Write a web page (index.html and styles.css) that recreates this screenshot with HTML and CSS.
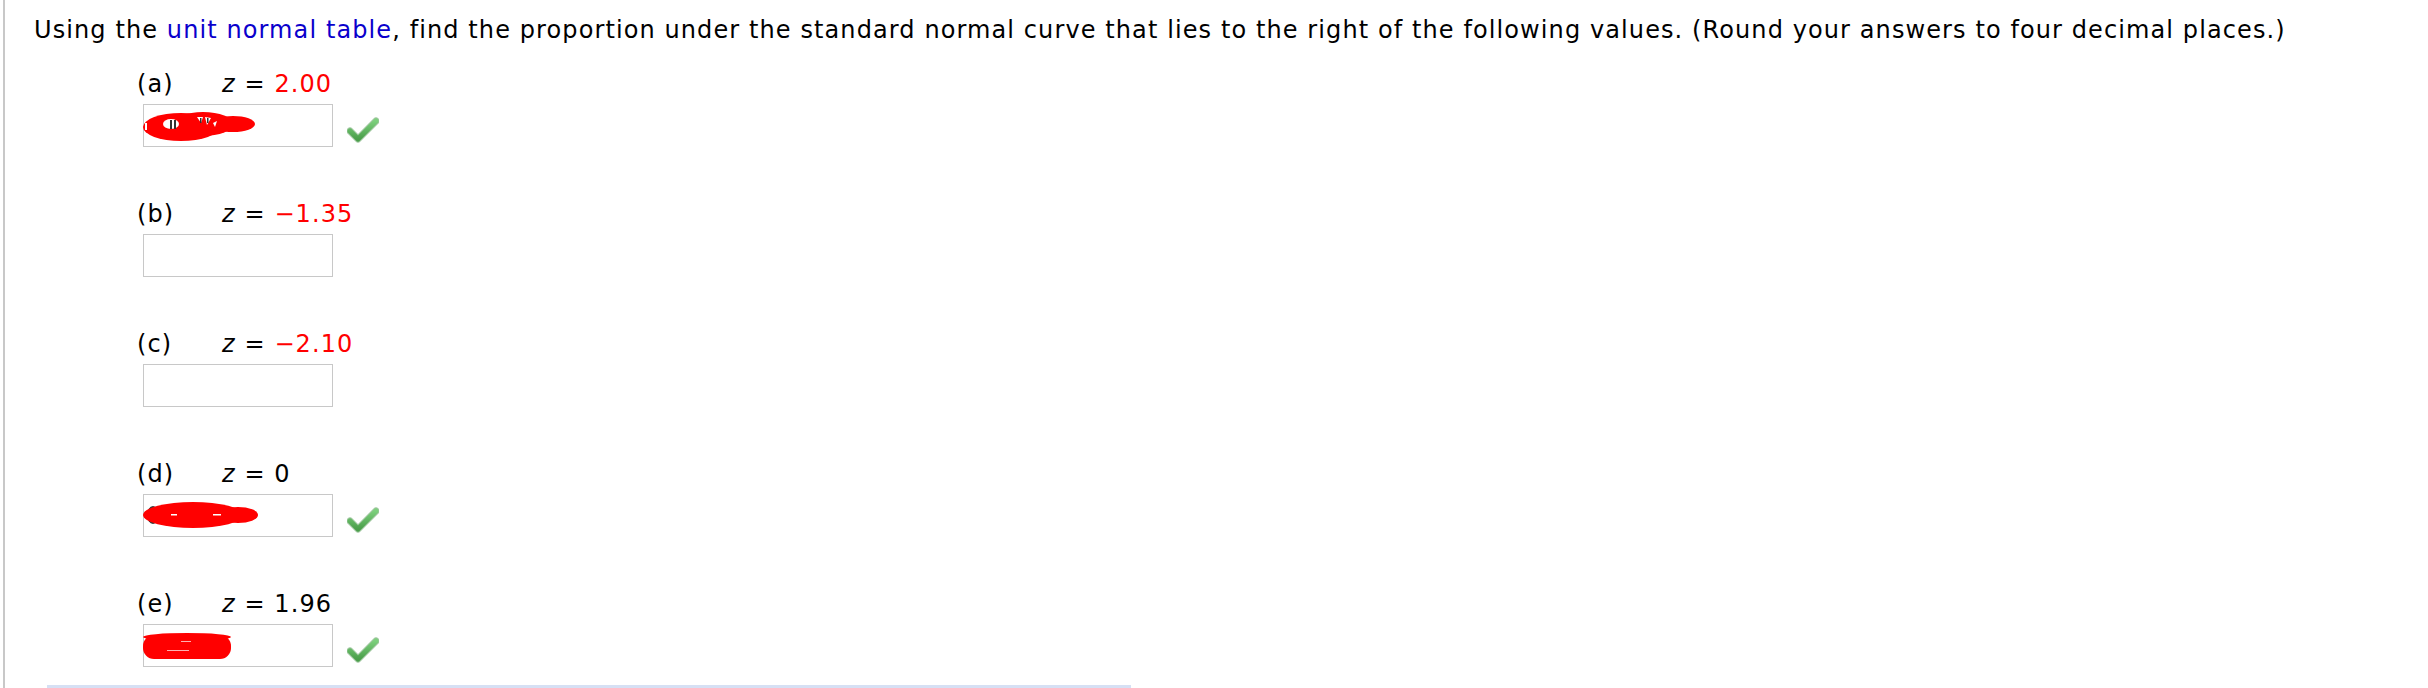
FILE: index.html
```html
<!DOCTYPE html>
<html>
<head>
<meta charset="utf-8">
<link rel="stylesheet" href="styles.css">
</head>
<body>
<div class="page">
  <p class="intro">Using the <a class="link" href="#">unit normal table</a>, find the proportion under the standard normal curve that lies to the right of the following values. (Round your answers to four decimal places.)</p>

  <div class="parts">
  <div class="part">
    <div class="qline"><span class="lbl">(a)</span><span class="expr"><i>z</i> = <span class="val">2.00</span></span></div>
    <div class="aline">
      <div class="box">
        <svg class="blob" width="120" height="34" viewBox="0 0 120 34">
          <ellipse cx="38" cy="18" rx="38" ry="14" fill="#ff0000"/>
          <ellipse cx="60" cy="15" rx="30" ry="12" fill="#ff0000"/>
          <ellipse cx="90" cy="15" rx="22" ry="8" fill="#ff0000"/>
          <ellipse cx="28" cy="15" rx="8" ry="5" fill="#fff"/>
          <rect x="27" y="11" width="2" height="9" fill="#333"/>
          <rect x="31" y="11" width="2" height="9" fill="#333"/>
          <path d="M54 8 L60 8 L58 14 Z M62 8 L68 9 L64 16 Z M70 14 L74 12 L72 18 Z" fill="#fff"/>
          <rect x="57" y="9" width="1.5" height="5" fill="#333"/>
          <rect x="64" y="9" width="1.5" height="5" fill="#333"/>
          <rect x="2" y="14" width="2" height="7" fill="#fff"/>
        </svg>
      </div>
      <svg class="check" width="32" height="26" viewBox="0 0 32 26"><defs><linearGradient id="g1" x1="0" y1="0" x2="0" y2="1"><stop offset="0" stop-color="#7ccf7c"/><stop offset="1" stop-color="#4a9e4a"/></linearGradient></defs><path d="M3 14 L11 22 L29 4" fill="none" stroke="#3f8f3f" stroke-opacity="0.5" stroke-width="7" stroke-linecap="round" stroke-linejoin="round"/><path d="M3 14 L11 22 L29 4" fill="none" stroke="url(#g1)" stroke-width="5" stroke-linecap="round" stroke-linejoin="round"/></svg>
    </div>
  </div>

  <div class="part">
    <div class="qline"><span class="lbl">(b)</span><span class="expr"><i>z</i> = <span class="val">&minus;1.35</span></span></div>
    <div class="aline">
      <div class="box"></div>
    </div>
  </div>

  <div class="part">
    <div class="qline"><span class="lbl">(c)</span><span class="expr"><i>z</i> = <span class="val">&minus;2.10</span></span></div>
    <div class="aline">
      <div class="box"></div>
    </div>
  </div>

  <div class="part">
    <div class="qline"><span class="lbl">(d)</span><span class="expr"><i>z</i> = 0</span></div>
    <div class="aline">
      <div class="box">
        <svg class="blob" width="120" height="34" viewBox="0 0 120 34">
          <ellipse cx="10" cy="16" rx="6" ry="9" fill="#333"/>
          <ellipse cx="50" cy="16" rx="50" ry="13" fill="#ff0000"/>
          <ellipse cx="95" cy="16" rx="20" ry="8" fill="#ff0000"/>
          <rect x="28" y="15" width="6" height="1.5" fill="#fff"/>
          <rect x="70" y="15" width="8" height="1.5" fill="#fff"/>
        </svg>
      </div>
      <svg class="check" width="32" height="26" viewBox="0 0 32 26"><defs><linearGradient id="g2" x1="0" y1="0" x2="0" y2="1"><stop offset="0" stop-color="#7ccf7c"/><stop offset="1" stop-color="#4a9e4a"/></linearGradient></defs><path d="M3 14 L11 22 L29 4" fill="none" stroke="#3f8f3f" stroke-opacity="0.5" stroke-width="7" stroke-linecap="round" stroke-linejoin="round"/><path d="M3 14 L11 22 L29 4" fill="none" stroke="url(#g2)" stroke-width="5" stroke-linecap="round" stroke-linejoin="round"/></svg>
    </div>
  </div>

  <div class="part">
    <div class="qline"><span class="lbl">(e)</span><span class="expr"><i>z</i> = 1.96</span></div>
    <div class="aline">
      <div class="box">
        <svg class="blob" width="120" height="34" viewBox="0 0 120 34">
          <rect x="0" y="6" width="88" height="24" rx="11" fill="#ff0000"/>
          <ellipse cx="44" cy="8" rx="44" ry="4" fill="#ff0000"/>
          <rect x="38" y="12" width="10" height="1" fill="#ffb0b0"/>
          <rect x="24" y="21" width="22" height="1" fill="#ffb0b0"/>
        </svg>
      </div>
      <svg class="check" width="32" height="26" viewBox="0 0 32 26"><defs><linearGradient id="g3" x1="0" y1="0" x2="0" y2="1"><stop offset="0" stop-color="#7ccf7c"/><stop offset="1" stop-color="#4a9e4a"/></linearGradient></defs><path d="M3 14 L11 22 L29 4" fill="none" stroke="#3f8f3f" stroke-opacity="0.5" stroke-width="7" stroke-linecap="round" stroke-linejoin="round"/><path d="M3 14 L11 22 L29 4" fill="none" stroke="url(#g3)" stroke-width="5" stroke-linecap="round" stroke-linejoin="round"/></svg>
    </div>
  </div>
  </div>

  <div class="footbar"></div>
</div>
</body>
</html>
```
FILE: styles.css
```css
html, body {
  margin: 0;
  padding: 0;
  background: #ffffff;
}

body {
  font-family: "DejaVu Sans", Verdana, sans-serif;
  font-size: 24px;
  color: #000000;
  letter-spacing: 1.1px;
}

.page {
  margin-left: 3px;
  border-left: 2px solid #c8c8c8;
  height: 688px;
  overflow: hidden;
  box-sizing: border-box;
  padding-top: 16px;
}

.intro {
  margin: 0;
  padding-left: 29px;
  line-height: 28px;
  white-space: nowrap;
}

.link {
  color: #0a00cc;
  text-decoration: none;
}

.parts {
  margin-top: 26px;
}

.part {
  margin-left: 132px;
  margin-bottom: 53px;
}

.part:last-child {
  margin-bottom: 18px;
}

.qline {
  display: flex;
  line-height: 28px;
  height: 28px;
  margin-bottom: 6px;
}

.lbl {
  width: 85px;
}

.expr i {
  font-style: italic;
}

.val {
  color: #ff0000;
}

.aline {
  display: flex;
  align-items: center;
  height: 43px;
}

.box {
  width: 190px;
  height: 43px;
  box-sizing: border-box;
  border: 1px solid #c8c8c8;
  margin-left: 6px;
  display: flex;
  align-items: center;
}

.blob {
  display: block;
  margin-left: -1px;
}

.check {
  display: block;
  margin-left: 14px;
  margin-top: 8px;
}

.footbar {
  margin-left: 42px;
  width: 1084px;
  height: 6px;
  background: #d6e0f4;
}
```
